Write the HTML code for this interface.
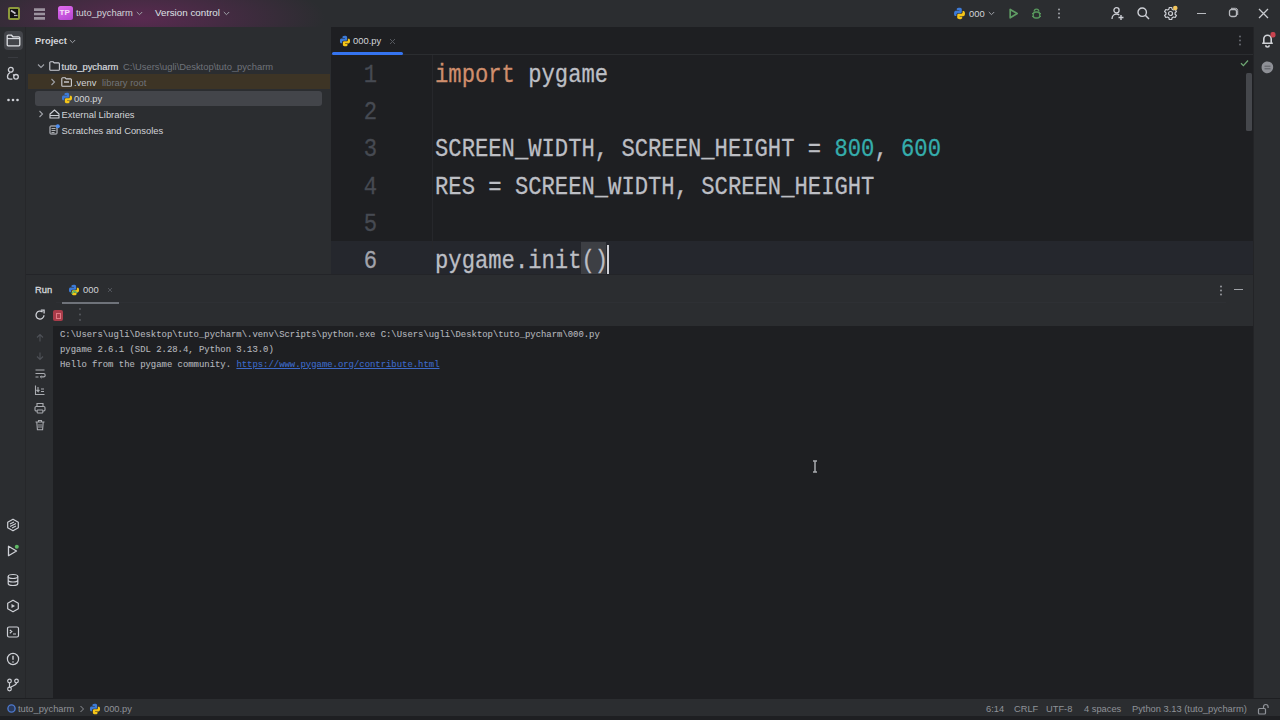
<!DOCTYPE html>
<html><head><meta charset="utf-8">
<style>
*{margin:0;padding:0;box-sizing:border-box}
html,body{width:1280px;height:720px;overflow:hidden;background:#2b2d30;font-family:"Liberation Sans",sans-serif;color:#dfe1e5}
.abs{position:absolute}
#top{left:0;top:0;width:1280px;height:27px;background:#2b2d30;overflow:hidden}
#topglow{left:0;top:0;width:1280px;height:27px;background:radial-gradient(185px 48px at 140px 18px,rgba(120,40,102,.6),rgba(100,40,90,.32) 60%,rgba(43,45,48,0) 100%)}
#lstripe{left:0;top:27px;width:26px;height:671px;background:#2b2d30;border-right:1px solid #26272a}
#proj{left:26px;top:27px;width:305px;height:247px;background:#2b2d30}
#editor{left:331px;top:27px;width:922px;height:247px;background:#1e1f22;overflow:hidden}
#rstripe{left:1253px;top:27px;width:27px;height:671px;background:#2b2d30;border-left:1px solid #232427}
#run{left:26px;top:274px;width:1227px;height:424px;background:#2b2d30;border-top:1px solid #232428}
#console{left:53px;top:326px;width:1200px;height:372px;background:#1e1f22}
#status{left:0;top:698px;width:1280px;height:22px;background:#2b2d30;border-top:1px solid #1e1f22}
.code{position:absolute;font-family:"Liberation Mono",monospace;font-size:22.2px;line-height:22.2px;white-space:pre;transform:scaleY(1.12);transform-origin:0 0;-webkit-text-stroke:.25px currentColor}
.ln{left:1px;width:45px;text-align:right;color:#464a52}
.tx{left:104px;color:#bcbec4}
.kw{color:#cf8e6d}.nm{color:#35adac}
.con{position:absolute;font-family:"Liberation Mono",monospace;font-size:8.92px;line-height:10px;white-space:pre;color:#b4b6bc;-webkit-text-stroke:.1px currentColor}
.t{position:absolute;white-space:pre;line-height:1}
</style></head><body>
<div id="top" class="abs"><div id="topglow" class="abs"></div>
<!-- logo -->
<div class="abs" style="left:7.5px;top:7px;width:12.5px;height:13px;border-radius:2px;background:#8d9a3c"></div>
<div class="abs" style="left:9.5px;top:9px;width:8.5px;height:9px;background:#141414"></div>
<svg class="abs" style="left:9.5px;top:9px" width="9" height="9" viewBox="0 0 9 9"><path d="M1 1.5l4.5 3" stroke="#c8c6d0" stroke-width="1.6"/><path d="M4 6.5h3.5" stroke="#b0aeb8" stroke-width="1.2"/></svg>
<!-- hamburger -->
<svg class="abs" style="left:33.5px;top:7.5px" width="11" height="12" viewBox="0 0 11 12"><path d="M0 1.6h11M0 6h11M0 10.4h11" stroke="#9c939f" stroke-width="2.6"/></svg>
<!-- TP badge -->
<div class="abs" style="left:58px;top:6px;width:14.5px;height:14px;border-radius:2.5px;background:linear-gradient(160deg,#e26cf0,#b344d0)"></div>
<div class="t" style="left:59.5px;top:9px;font-size:8px;font-weight:bold;color:#f6e0f8">TP</div>
<div class="t" style="left:76px;top:8px;font-size:9.4px;color:#d2d4d8">tuto_pycharm</div>
<svg class="abs" style="left:136px;top:11px" width="7" height="5" viewBox="0 0 7 5"><path d="M.8 1l2.7 2.7L6.2 1" stroke="#9fa2a8" stroke-width="1" fill="none"/></svg>
<div class="t" style="left:155px;top:8px;font-size:9.8px;color:#dfe1e5">Version control</div>
<svg class="abs" style="left:223px;top:11px" width="7" height="5" viewBox="0 0 7 5"><path d="M.8 1l2.7 2.7L6.2 1" stroke="#9fa2a8" stroke-width="1" fill="none"/></svg>
<!-- python run config icon -->
<svg class="abs" style="left:953px;top:7px" width="13" height="13" viewBox="0 0 13 13"><path d="M6.3 .8c-2.6 0-2.5 1.2-2.5 1.2v1.3h2.6v.5H2.7S1 3.6 1 6.4s1.5 2.6 1.5 2.6h.9V7.7s0-1.5 1.5-1.5h2.5s1.4 0 1.4-1.4V2.4S9 .8 6.3 .8z" fill="#3d7ad6"/><path d="M6.7 12.2c2.6 0 2.5-1.2 2.5-1.2V9.7H6.6v-.5h3.7S12 9.4 12 6.6 10.5 4 10.5 4h-.9v1.3s0 1.5-1.5 1.5H5.6s-1.4 0-1.4 1.4v2.4S4 12.2 6.7 12.2z" fill="#f5c518"/></svg>
<div class="t" style="left:969px;top:8.5px;font-size:9.4px;color:#d2d4d8">000</div>
<svg class="abs" style="left:988px;top:11px" width="7" height="5" viewBox="0 0 7 5"><path d="M.8 1l2.7 2.7L6.2 1" stroke="#9fa2a8" stroke-width="1" fill="none"/></svg>
<!-- run -->
<svg class="abs" style="left:1007px;top:7px" width="13" height="13" viewBox="0 0 13 13"><path d="M3.2 2.4v8.4l7-4.2z" stroke="#5f9c64" stroke-width="1.7" fill="none" stroke-linejoin="round"/></svg>
<!-- debug -->
<svg class="abs" style="left:1030px;top:7px" width="13" height="13" viewBox="0 0 13 13"><path d="M4.2 4.5a2.3 2.3 0 0 1 4.6 0" stroke="#57965c" stroke-width="1.3" fill="none"/><rect x="3.2" y="5" width="6.6" height="6" rx="2.6" stroke="#57965c" stroke-width="1.4" fill="none"/><path d="M2 6.5h1.2M9.8 6.5H11M2 9.5h1.2M9.8 9.5H11" stroke="#57965c" stroke-width="1"/></svg>
<!-- more -->
<svg class="abs" style="left:1056px;top:7px" width="6" height="13" viewBox="0 0 6 13"><circle cx="3" cy="2.5" r="1" fill="#a0a3a8"/><circle cx="3" cy="6.5" r="1" fill="#a0a3a8"/><circle cx="3" cy="10.5" r="1" fill="#a0a3a8"/></svg>
<!-- person add -->
<svg class="abs" style="left:1110px;top:6px" width="15" height="15" viewBox="0 0 15 15"><circle cx="6.5" cy="4.3" r="2.6" stroke="#ced0d6" stroke-width="1.3" fill="none"/><path d="M2 13c0-3 2-5 4.5-5 1.2 0 2 .3 2.7.9" stroke="#ced0d6" stroke-width="1.3" fill="none"/><path d="M11 9v5M8.5 11.5h5" stroke="#ced0d6" stroke-width="1.4"/></svg>
<!-- search -->
<svg class="abs" style="left:1136px;top:6px" width="15" height="15" viewBox="0 0 15 15"><circle cx="6.2" cy="6.2" r="4.2" stroke="#ced0d6" stroke-width="1.4" fill="none"/><path d="M9.3 9.3l3.7 3.7" stroke="#ced0d6" stroke-width="1.5"/></svg>
<!-- settings -->
<svg class="abs" style="left:1162px;top:5px" width="17" height="17" viewBox="0 0 17 17"><path d="M7.3 2.5h2.4l.4 1.7 1.4.8 1.7-.5 1.2 2-1.3 1.2v1.6l1.3 1.2-1.2 2-1.7-.5-1.4.8-.4 1.7H7.3l-.4-1.7-1.4-.8-1.7.5-1.2-2 1.3-1.2V7.7L2.6 6.5l1.2-2 1.7.5 1.4-.8z" stroke="#ced0d6" stroke-width="1.2" fill="none" stroke-linejoin="round"/><circle cx="8.5" cy="8.5" r="2" stroke="#ced0d6" stroke-width="1.2" fill="none"/><circle cx="13.3" cy="3" r="2.3" fill="#f2c55c"/></svg>
<!-- window controls -->
<div class="abs" style="left:1197px;top:13px;width:9px;height:1.3px;background:#b8babf"></div>
<svg class="abs" style="left:1227px;top:7px" width="12" height="12" viewBox="0 0 12 12"><rect x="2.5" y="2.5" width="7" height="7" rx="2" stroke="#b8babf" stroke-width="1.3" fill="none"/><path d="M4 1.3h4.5a2.3 2.3 0 0 1 2.2 2.2V8" stroke="#b8babf" stroke-width="1" fill="none"/></svg>
<svg class="abs" style="left:1258px;top:8px" width="11" height="11" viewBox="0 0 11 11"><path d="M1 1l9 9M10 1l-9 9" stroke="#c8cacf" stroke-width="1.3"/></svg>
</div>
<div id="lstripe" class="abs">
<div class="abs" style="left:4px;top:4px;width:19px;height:19px;border-radius:4px;background:#43454a"></div>
<svg class="abs" style="left:6px;top:7px" width="15" height="13" viewBox="0 0 15 13"><path d="M1.2 2.2a1 1 0 0 1 1-1h3.3l1.4 1.6h5.9a1 1 0 0 1 1 1v7a1 1 0 0 1-1 1H2.2a1 1 0 0 1-1-1z" stroke="#dfe1e5" stroke-width="1.3" fill="none"/><path d="M1.2 4.6h12.6" stroke="#dfe1e5" stroke-width="1.1"/></svg>
<div class="abs" style="left:8px;top:30px;width:10px;height:1px;background:#393b40"></div>
<svg class="abs" style="left:6px;top:39px" width="14" height="15" viewBox="0 0 14 15"><circle cx="4.8" cy="3.8" r="2.4" stroke="#ced0d6" stroke-width="1.3" fill="none"/><path d="M4.2 6.5c-1.8 1-2.7 2.5-2.7 4.3a2.3 2.3 0 0 0 2.3 2.3h2.6" stroke="#ced0d6" stroke-width="1.3" fill="none"/><circle cx="10" cy="10.8" r="2.3" stroke="#ced0d6" stroke-width="1.3" fill="none"/><path d="M7 8.5l1.5 1.2" stroke="#ced0d6" stroke-width="1.2"/></svg>
<svg class="abs" style="left:6px;top:70px" width="14" height="6" viewBox="0 0 14 6"><circle cx="2.5" cy="3" r="1.3" fill="#ced0d6"/><circle cx="7" cy="3" r="1.3" fill="#ced0d6"/><circle cx="11.5" cy="3" r="1.3" fill="#ced0d6"/></svg>
<!-- bottom icons -->
<svg class="abs" style="left:6px;top:491px" width="14" height="14" viewBox="0 0 14 14"><path d="M7 1.2l5.3 3v5.6L7 12.8 1.7 9.8V4.2z" stroke="#ced0d6" stroke-width="1.2" fill="none" stroke-linejoin="round"/><path d="M4 8.5l6-3M4 6l4-2M6 10l4-2" stroke="#ced0d6" stroke-width="1.1"/></svg>
<svg class="abs" style="left:6px;top:517px" width="14" height="14" viewBox="0 0 14 14"><path d="M2.5 2.3v9.4l8-4.7z" stroke="#ced0d6" stroke-width="1.3" fill="none" stroke-linejoin="round"/><circle cx="10.8" cy="2.8" r="2" fill="#5fb865"/></svg>
<svg class="abs" style="left:6px;top:546px" width="14" height="14" viewBox="0 0 14 14"><ellipse cx="7" cy="3.5" rx="4.8" ry="2" stroke="#ced0d6" stroke-width="1.2" fill="none"/><path d="M2.2 3.5v7c0 1.1 2.1 2 4.8 2s4.8-.9 4.8-2v-7M2.2 7c0 1.1 2.1 2 4.8 2s4.8-.9 4.8-2" stroke="#ced0d6" stroke-width="1.2" fill="none"/></svg>
<svg class="abs" style="left:6px;top:572px" width="14" height="14" viewBox="0 0 14 14"><path d="M7 1.2l5.3 3v5.6L7 12.8 1.7 9.8V4.2z" stroke="#ced0d6" stroke-width="1.2" fill="none" stroke-linejoin="round"/><path d="M5.5 5v4l3.5-2z" fill="#ced0d6"/></svg>
<svg class="abs" style="left:6px;top:598px" width="14" height="14" viewBox="0 0 14 14"><rect x="1.5" y="2" width="11" height="10" rx="1.5" stroke="#ced0d6" stroke-width="1.2" fill="none"/><path d="M3.8 5l2 1.6-2 1.6M7 9h3" stroke="#ced0d6" stroke-width="1.1" fill="none"/></svg>
<svg class="abs" style="left:6px;top:625px" width="14" height="14" viewBox="0 0 14 14"><circle cx="7" cy="7" r="5.6" stroke="#ced0d6" stroke-width="1.2" fill="none"/><path d="M7 3.8v4" stroke="#ced0d6" stroke-width="1.4"/><circle cx="7" cy="10" r=".8" fill="#ced0d6"/></svg>
<svg class="abs" style="left:6px;top:651px" width="14" height="14" viewBox="0 0 14 14"><circle cx="3.5" cy="3" r="1.8" stroke="#ced0d6" stroke-width="1.2" fill="none"/><circle cx="10.5" cy="3" r="1.8" stroke="#ced0d6" stroke-width="1.2" fill="none"/><circle cx="3.5" cy="11" r="1.8" stroke="#ced0d6" stroke-width="1.2" fill="none"/><path d="M3.5 4.8v4.4M10.5 4.8c0 3-4 2.5-6.5 5" stroke="#ced0d6" stroke-width="1.2" fill="none"/></svg>
</div>
<div id="proj" class="abs">
<div class="t" style="left:9px;top:9px;font-size:9.4px;font-weight:bold;color:#d2d4d8">Project</div>
<svg class="abs" style="left:43px;top:12px" width="7" height="5" viewBox="0 0 7 5"><path d="M.8 1l2.7 2.7L6.2 1" stroke="#9fa2a8" stroke-width="1" fill="none"/></svg>
<!-- row1 -->
<svg class="abs" style="left:11px;top:36px" width="8" height="6" viewBox="0 0 8 6"><path d="M1 1.5l3 3 3-3" stroke="#9fa2a8" stroke-width="1.1" fill="none"/></svg>
<svg class="abs" style="left:23px;top:34px" width="11" height="10" viewBox="0 0 11 10"><path d="M.8 1.6a.8.8 0 0 1 .8-.8h2.6l1 1.1h4.4a.8.8 0 0 1 .8.8v5.7a.8.8 0 0 1-.8.8H1.6a.8.8 0 0 1-.8-.8z" stroke="#ced0d6" stroke-width="1.1" fill="none"/></svg>
<div class="t" style="left:35.6px;top:34.5px;font-size:9.4px;color:#d6d8dc;-webkit-text-stroke:.2px #d6d8dc">tuto_pycharm</div>
<div class="t" style="left:97px;top:34.5px;font-size:9.4px;color:#6f737a">C:\Users\ugli\Desktop\tuto_pycharm</div>
<!-- venv row -->
<div class="abs" style="left:2px;top:47px;width:302px;height:14.5px;background:#3d3425"></div>
<svg class="abs" style="left:24px;top:51px" width="6" height="8" viewBox="0 0 6 8"><path d="M1.5 1l3 3-3 3" stroke="#9fa2a8" stroke-width="1.1" fill="none"/></svg>
<svg class="abs" style="left:35px;top:50px" width="11" height="10" viewBox="0 0 11 10"><path d="M.8 1.6a.8.8 0 0 1 .8-.8h2.6l1 1.1h4.4a.8.8 0 0 1 .8.8v5.7a.8.8 0 0 1-.8.8H1.6a.8.8 0 0 1-.8-.8z" stroke="#ced0d6" stroke-width="1.1" fill="none"/><path d="M3 5h5" stroke="#ced0d6" stroke-width="1.4"/></svg>
<div class="t" style="left:48px;top:50.5px;font-size:9.4px;color:#d2d4d8">.venv</div>
<div class="t" style="left:76px;top:50.5px;font-size:9.4px;color:#6f737a">library root</div>
<!-- 000.py selected -->
<div class="abs" style="left:9px;top:64px;width:287px;height:15px;border-radius:3px;background:#43454a"></div>
<svg class="abs" style="left:35px;top:65px" width="12" height="12" viewBox="0 0 13 13"><path d="M6.3 .8c-2.6 0-2.5 1.2-2.5 1.2v1.3h2.6v.5H2.7S1 3.6 1 6.4s1.5 2.6 1.5 2.6h.9V7.7s0-1.5 1.5-1.5h2.5s1.4 0 1.4-1.4V2.4S9 .8 6.3 .8z" fill="#3d7ad6"/><path d="M6.7 12.2c2.6 0 2.5-1.2 2.5-1.2V9.7H6.6v-.5h3.7S12 9.4 12 6.6 10.5 4 10.5 4h-.9v1.3s0 1.5-1.5 1.5H5.6s-1.4 0-1.4 1.4v2.4S4 12.2 6.7 12.2z" fill="#f5c518"/></svg>
<div class="t" style="left:48px;top:66.5px;font-size:9.4px;color:#d2d4d8">000.py</div>
<!-- External Libraries -->
<svg class="abs" style="left:12px;top:83px" width="6" height="8" viewBox="0 0 6 8"><path d="M1.5 1l3 3-3 3" stroke="#9fa2a8" stroke-width="1.1" fill="none"/></svg>
<svg class="abs" style="left:23px;top:82px" width="11" height="10" viewBox="0 0 11 10"><path d="M1 9V5l4.5-4L10 5v4z" stroke="#ced0d6" stroke-width="1.1" fill="none" stroke-linejoin="round"/><path d="M1 6.5h9" stroke="#ced0d6" stroke-width="1"/></svg>
<div class="t" style="left:35.6px;top:82.5px;font-size:9.4px;color:#d2d4d8">External Libraries</div>
<!-- Scratches -->
<svg class="abs" style="left:23px;top:97px" width="11" height="11" viewBox="0 0 11 11"><rect x="1" y="2" width="7" height="8" rx=".8" stroke="#ced0d6" stroke-width="1" fill="none"/><path d="M2.5 4.5h4M2.5 6.5h4M2.5 8.5h3" stroke="#ced0d6" stroke-width=".8"/><circle cx="8.8" cy="2.2" r="2" fill="#4d8ef2"/></svg>
<div class="t" style="left:35.6px;top:98.5px;font-size:9.4px;color:#d2d4d8">Scratches and Consoles</div>
</div>
<div id="editor" class="abs" style="z-index:2">
<!-- tab -->
<svg class="abs" style="left:8px;top:8px" width="12" height="12" viewBox="0 0 13 13"><path d="M6.3 .8c-2.6 0-2.5 1.2-2.5 1.2v1.3h2.6v.5H2.7S1 3.6 1 6.4s1.5 2.6 1.5 2.6h.9V7.7s0-1.5 1.5-1.5h2.5s1.4 0 1.4-1.4V2.4S9 .8 6.3 .8z" fill="#3d7ad6"/><path d="M6.7 12.2c2.6 0 2.5-1.2 2.5-1.2V9.7H6.6v-.5h3.7S12 9.4 12 6.6 10.5 4 10.5 4h-.9v1.3s0 1.5-1.5 1.5H5.6s-1.4 0-1.4 1.4v2.4S4 12.2 6.7 12.2z" fill="#f5c518"/></svg>
<div class="t" style="left:22px;top:9px;font-size:9.4px;color:#d2d4d8">000.py</div>
<svg class="abs" style="left:57.5px;top:10.5px" width="7" height="7" viewBox="0 0 7 7"><path d="M1 1l5 5M6 1L1 6" stroke="#55585e" stroke-width="1"/></svg>
<div class="abs" style="left:0;top:27px;width:922px;height:1px;background:#2b2d30"></div>
<div class="abs" style="left:1px;top:25px;width:71px;height:3px;border-radius:1.5px;background:#3574f0"></div>
<svg class="abs" style="left:907px;top:7px" width="4" height="13" viewBox="0 0 4 13"><circle cx="2" cy="2.5" r=".9" fill="#6f737a"/><circle cx="2" cy="6.5" r=".9" fill="#6f737a"/><circle cx="2" cy="10.5" r=".9" fill="#6f737a"/></svg>
<!-- current line -->
<div class="abs" style="left:0;top:213.8px;width:922px;height:37px;background:#25272d"></div>
<!-- gutter line -->
<div class="abs" style="left:101px;top:28px;width:1px;height:220px;background:#26272b"></div>
<!-- bracket match -->
<div class="abs" style="left:250px;top:214.5px;width:25px;height:33px;background:#3d3f44"></div>
<div class="abs" style="left:276px;top:218px;width:1.5px;height:29px;background:#ced0d6"></div>
<!-- line numbers -->
<div class="code ln" style="top:36.7px">1</div>
<div class="code ln" style="top:74.0px">2</div>
<div class="code ln" style="top:111.3px">3</div>
<div class="code ln" style="top:148.6px">4</div>
<div class="code ln" style="top:185.9px">5</div>
<div class="code ln" style="top:223.2px;color:#a1a3ab">6</div>
<!-- code -->
<div class="code tx" style="top:36.7px"><span class="kw">import</span> pygame</div>
<div class="code tx" style="top:111.3px">SCREEN_WIDTH, SCREEN_HEIGHT = <span class="nm">800</span>, <span class="nm">600</span></div>
<div class="code tx" style="top:148.6px">RES = SCREEN_WIDTH, SCREEN_HEIGHT</div>
<div class="code tx" style="top:223.2px">pygame.init()</div>
<!-- right side -->
<svg class="abs" style="left:909px;top:32px" width="9" height="8" viewBox="0 0 9 8"><path d="M1 4.2l2.4 2.4L8 1.5" stroke="#6fa874" stroke-width="1.3" fill="none"/></svg>
<div class="abs" style="left:914.6px;top:45.5px;width:6.6px;height:58px;border-radius:1.5px;background:#45474c"></div>
</div>
<div id="rstripe" class="abs">
<svg class="abs" style="left:6px;top:4px" width="16" height="17" viewBox="0 0 16 17"><path d="M2.2 12.3h10.6M3.8 12.3V8a3.7 3.7 0 0 1 7.4 0v4.3M5.8 14.3a1.7 1.7 0 0 0 3.4 0" stroke="#d0d2d6" stroke-width="1.6" fill="none"/><rect x="10.5" y="1" width="5" height="5.5" rx="2" fill="#c9434f"/></svg>
<svg class="abs" style="left:6px;top:33px" width="15" height="15" viewBox="0 0 15 15"><path d="M7.3 1.5c3.2 0 5.9 2 5.9 5.6 0 3.3-2.6 6.2-6 6.2-3.1 0-5.6-2.6-5.6-5.8C1.6 4 4 1.5 7.3 1.5z" fill="#8e9096"/><path d="M4.5 6.2h6M4.5 8.8h6" stroke="#5a5c61" stroke-width="1"/></svg>
</div>
<div id="run" class="abs">
<div class="t" style="left:9px;top:10px;font-size:9.4px;color:#d6d8dc;-webkit-text-stroke:.3px #d6d8dc">Run</div>
<svg class="abs" style="left:42px;top:9px" width="12" height="12" viewBox="0 0 13 13"><path d="M6.3 .8c-2.6 0-2.5 1.2-2.5 1.2v1.3h2.6v.5H2.7S1 3.6 1 6.4s1.5 2.6 1.5 2.6h.9V7.7s0-1.5 1.5-1.5h2.5s1.4 0 1.4-1.4V2.4S9 .8 6.3 .8z" fill="#3d7ad6"/><path d="M6.7 12.2c2.6 0 2.5-1.2 2.5-1.2V9.7H6.6v-.5h3.7S12 9.4 12 6.6 10.5 4 10.5 4h-.9v1.3s0 1.5-1.5 1.5H5.6s-1.4 0-1.4 1.4v2.4S4 12.2 6.7 12.2z" fill="#f5c518"/><path d="M4 10.5l2.5-3 3.5 2" stroke="#5fb865" stroke-width="1.6" fill="none"/></svg>
<div class="t" style="left:57px;top:10px;font-size:9.4px;color:#d2d4d8">000</div>
<svg class="abs" style="left:81px;top:12px" width="6" height="6" viewBox="0 0 6 6"><path d="M1 1l4 4M5 1L1 5" stroke="#55585e" stroke-width=".9"/></svg>
<div class="abs" style="left:30px;top:27px;width:1170px;height:1px;background:#2e3034"></div>
<div class="abs" style="left:36px;top:26.5px;width:57px;height:2px;background:#6f737a"></div>
<!-- toolbar -->
<svg class="abs" style="left:8px;top:34px" width="12" height="12" viewBox="0 0 12 12"><path d="M10 6.2A4 4 0 1 1 8.6 3" stroke="#ced0d6" stroke-width="1.3" fill="none"/><path d="M6.8 1.2h3.3v3.3" stroke="#ced0d6" stroke-width="1.3" fill="none"/></svg>
<div class="abs" style="left:27px;top:35px;width:10px;height:11px;border-radius:2px;background:#a93c4a"></div>
<div class="abs" style="left:29.5px;top:37.5px;width:5px;height:6px;border:1px solid #e07a85"></div>
<svg class="abs" style="left:52px;top:31px" width="4" height="17" viewBox="0 0 4 17"><circle cx="2" cy="3" r=".9" fill="#5a5d63"/><circle cx="2" cy="8.5" r=".9" fill="#5a5d63"/><circle cx="2" cy="14" r=".9" fill="#5a5d63"/></svg>
<svg class="abs" style="left:1193px;top:9px" width="4" height="13" viewBox="0 0 4 13"><circle cx="2" cy="2.5" r=".9" fill="#a0a3a8"/><circle cx="2" cy="6.5" r=".9" fill="#a0a3a8"/><circle cx="2" cy="10.5" r=".9" fill="#a0a3a8"/></svg>
<div class="abs" style="left:1208px;top:13.8px;width:9px;height:1.3px;background:#a0a3a8"></div>
<!-- sidebar -->
<svg class="abs" style="left:9px;top:58px" width="10" height="10" viewBox="0 0 10 10"><path d="M5 8.5V1.5M2 4.5l3-3 3 3" stroke="#4e5157" stroke-width="1.1" fill="none"/></svg>
<svg class="abs" style="left:9px;top:76px" width="10" height="10" viewBox="0 0 10 10"><path d="M5 1.5v7M2 5.5l3 3 3-3" stroke="#4e5157" stroke-width="1.1" fill="none"/></svg>
<svg class="abs" style="left:8px;top:93px" width="12" height="12" viewBox="0 0 12 12"><path d="M1.5 2h9M1.5 5.5h8a1.7 1.7 0 0 1 0 3.4H6.5M1.5 9h3" stroke="#a9abb0" stroke-width="1.1" fill="none"/><path d="M7.5 7.7L6.3 8.9 7.5 10" stroke="#a9abb0" stroke-width="1" fill="none"/></svg>
<svg class="abs" style="left:8px;top:109px" width="12" height="12" viewBox="0 0 12 12"><path d="M1.5 1.5v9h9M4 3v4.5l-1.5-1.5M4 7.5L5.5 6" stroke="#a9abb0" stroke-width="1.1" fill="none"/><path d="M7 5h3M7 7.5h3" stroke="#a9abb0" stroke-width="1"/></svg>
<svg class="abs" style="left:8px;top:127px" width="12" height="12" viewBox="0 0 12 12"><path d="M3 4.5V1.5h6v3" stroke="#a9abb0" stroke-width="1.1" fill="none"/><rect x="1" y="4.5" width="10" height="4.5" rx="1.2" stroke="#a9abb0" stroke-width="1.1" fill="none"/><path d="M3.2 8h5.6v3H3.2z" stroke="#a9abb0" stroke-width="1" fill="#2b2d30"/></svg>
<svg class="abs" style="left:8px;top:144px" width="12" height="12" viewBox="0 0 12 12"><path d="M1.5 3h9M4.5 3V1.5h3V3M2.8 3l.6 7.8h5.2L9.2 3" stroke="#a9abb0" stroke-width="1.1" fill="none"/><path d="M5 5v4M7 5v4" stroke="#a9abb0" stroke-width=".9"/></svg>
</div>
<div id="console" class="abs">
<div class="con" style="left:7px;top:4.2px">C:\Users\ugli\Desktop\tuto_pycharm\.venv\Scripts\python.exe C:\Users\ugli\Desktop\tuto_pycharm\000.py</div>
<div class="con" style="left:7px;top:18.8px">pygame 2.6.1 (SDL 2.28.4, Python 3.13.0)</div>
<div class="con" style="left:7px;top:33.5px">Hello from the pygame community. <span style="color:#3d6ac8;text-decoration:underline">https://www.pygame.org/contribute.html</span></div>
<!-- mouse ibeam -->
<svg class="abs" style="left:758.8px;top:133.5px" width="6" height="13" viewBox="0 0 6 13"><path d="M1 1h4M1 12h4M3 1v11" stroke="#a8aaae" stroke-width="1.5"/></svg>
</div>
<div id="status" class="abs">
<svg class="abs" style="left:7px;top:5px" width="9" height="9" viewBox="0 0 9 9"><circle cx="4.5" cy="4.5" r="3.6" stroke="#4d78cc" stroke-width="1.4" fill="#2a3a5c"/></svg>
<div class="t" style="left:18px;top:5.5px;font-size:9.3px;color:#8f9298">tuto_pycharm</div>
<svg class="abs" style="left:79px;top:6px" width="6" height="8" viewBox="0 0 6 8"><path d="M1.5 1l3 3-3 3" stroke="#8f9298" stroke-width="1" fill="none"/></svg>
<svg class="abs" style="left:89px;top:4px" width="12" height="12" viewBox="0 0 13 13"><path d="M6.3 .8c-2.6 0-2.5 1.2-2.5 1.2v1.3h2.6v.5H2.7S1 3.6 1 6.4s1.5 2.6 1.5 2.6h.9V7.7s0-1.5 1.5-1.5h2.5s1.4 0 1.4-1.4V2.4S9 .8 6.3 .8z" fill="#3d7ad6"/><path d="M6.7 12.2c2.6 0 2.5-1.2 2.5-1.2V9.7H6.6v-.5h3.7S12 9.4 12 6.6 10.5 4 10.5 4h-.9v1.3s0 1.5-1.5 1.5H5.6s-1.4 0-1.4 1.4v2.4S4 12.2 6.7 12.2z" fill="#f5c518"/></svg>
<div class="t" style="left:104px;top:5.5px;font-size:9.3px;color:#8f9298">000.py</div>
<div class="t" style="left:986px;top:5.5px;font-size:9.3px;color:#8f9298">6:14</div>
<div class="t" style="left:1014px;top:5.5px;font-size:9.3px;color:#8f9298">CRLF</div>
<div class="t" style="left:1046px;top:5.5px;font-size:9.3px;color:#8f9298">UTF-8</div>
<div class="t" style="left:1084px;top:5.5px;font-size:9.3px;color:#8f9298">4 spaces</div>
<div class="t" style="left:1132px;top:5.5px;font-size:9.3px;color:#8f9298">Python 3.13 (tuto_pycharm)</div>
<svg class="abs" style="left:1257px;top:4px" width="13" height="12" viewBox="0 0 13 12"><rect x="1.5" y="5.5" width="7" height="5.5" rx="1" stroke="#8f9298" stroke-width="1.2" fill="none"/><path d="M6.5 5.5V3.8a2.3 2.3 0 0 1 4.6 0V5" stroke="#8f9298" stroke-width="1.2" fill="none"/></svg>
<div class="abs" style="left:0;top:17px;width:1280px;height:4px;background:#1e1f22"></div>
</div>
</body></html>
